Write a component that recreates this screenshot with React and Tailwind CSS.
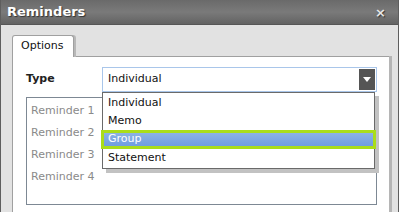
import React from 'react';

const items = ['Individual', 'Memo', 'Group', 'Statement'];
const reminders = ['Reminder 1', 'Reminder 2', 'Reminder 3', 'Reminder 4'];

const App = () => {
  return (
    <div
      className="relative w-[399px] h-[212px] overflow-hidden bg-[#e2e2e2] border-x border-[#5e5e5e] text-[11px]"
      style={{ fontFamily: '"DejaVu Sans", Verdana, sans-serif' }}
    >
      {/* Title bar */}
      <div className="flex items-center justify-between h-[25px] pl-[6px] pr-[12px] bg-gradient-to-b from-[#6a6a6a] via-[#7a7a7a] to-[#636363] border-b border-[#565656]">
        <span className="text-white font-bold text-[13px] [text-shadow:1px_1px_1px_#333]">Reminders</span>
        <span className="text-[#e8e8e8] font-bold text-[13px] leading-none [text-shadow:1px_1px_1px_#333]">×</span>
      </div>

      {/* Body */}
      <div className="pl-[11px] pr-[9px] pt-[10px]">
        {/* Tabs */}
        <div className="flex">
          <div className="relative z-10 -mb-px h-[22px] w-[62px] bg-white border border-b-0 border-[#a0a0a0] rounded-t-[3px] shadow-[2px_0_0_#b8b8b8] flex items-center pl-[8px] text-[#111]">
            Options
          </div>
        </div>

        {/* Panel */}
        <div className="relative bg-white border-l border-t border-[#a0a0a0] shadow-[3px_0_0_#b5b5b5] h-[160px] pl-[13px] pr-[12px] pt-[10px]">
          <div className="flex items-center h-[25px]">
            <span className="w-[76px] font-bold text-[#222]">Type</span>
            <div className="flex-1 h-[25px] border border-[#a9c6ea] bg-white flex items-center justify-between pl-[5px] pr-px">
              <span className="text-[#111]">Individual</span>
              <div className="w-[16px] h-[21px] bg-[#555] flex items-center justify-center">
                <svg width="8" height="5" viewBox="0 0 8 5">
                  <path d="M0 0 H8 L4 5 Z" fill="#fff" />
                </svg>
              </div>
            </div>
          </div>

          {/* Reminder list */}
          <div className="mt-[5px] h-[108px] border border-[#7d8894] pl-[4px] pt-[2px]">
            {reminders.map((r) => (
              <div key={r} className="h-[22px] flex items-center text-[#8a8a8a]">
                {r}
              </div>
            ))}
          </div>

          {/* Dropdown list */}
          <div className="absolute left-[89px] top-[35px] w-[273px] bg-white border border-[#6a6a6a] shadow-[4px_4px_0_#c2c2c2] py-px">
            {items.map((it) =>
              it === 'Group' ? (
                <div
                  key={it}
                  className="-ml-[2px] -mr-[2px] h-[19px] border-[3px] border-[#aadd1a] bg-gradient-to-b from-[#8cb2e4] to-[#6f9de0] flex items-center pl-[4px] text-white"
                >
                  {it}
                </div>
              ) : (
                <div key={it} className="h-[18px] flex items-center pl-[5px] text-[#111]">
                  {it}
                </div>
              )
            )}
          </div>
        </div>
      </div>
    </div>
  );
};

export default App;
